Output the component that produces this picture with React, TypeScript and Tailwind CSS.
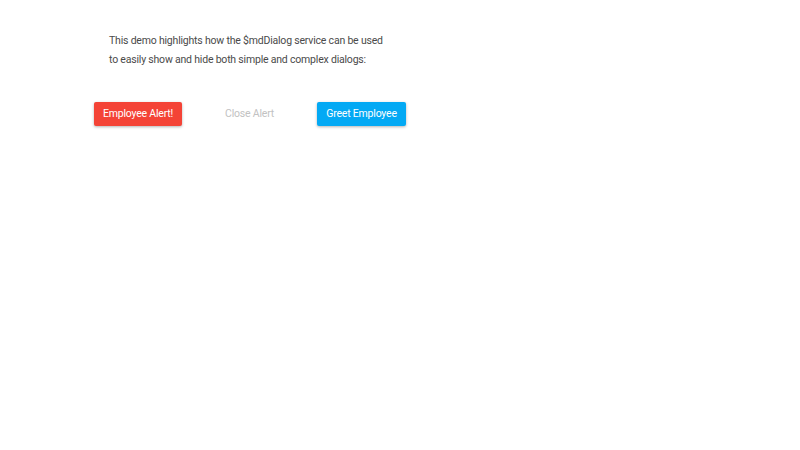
export default function App() {
  return (
    <div className="h-[450px] w-[800px] bg-white font-['Roboto',sans-serif] tracking-[-0.2px]">
      <div className="pl-[109px] pt-[31px] text-[10.5px] leading-[19px] text-[#4a4a4a]">
        <p>This demo highlights how the $mdDialog service can be used</p>
        <p>to easily show and hide both simple and complex dialogs:</p>
      </div>
      <div className="mt-[33px] flex items-center gap-[23.5px] pl-[94px]">
        <button className="flex h-[24px] w-[88px] items-center justify-center rounded-[2px] bg-[#f44336] text-[10.5px] text-white shadow-[0_1px_3px_rgba(0,0,0,0.3)]">
          Employee Alert!
        </button>
        <button className="flex h-[24px] w-[88px] items-center justify-center text-[10.5px] text-[#c2c2c2]">
          Close Alert
        </button>
        <button className="flex h-[24px] w-[89px] items-center justify-center rounded-[2px] bg-[#03a9f4] text-[10.5px] text-white shadow-[0_1px_3px_rgba(0,0,0,0.3)]">
          Greet Employee
        </button>
      </div>
    </div>
  )
}
